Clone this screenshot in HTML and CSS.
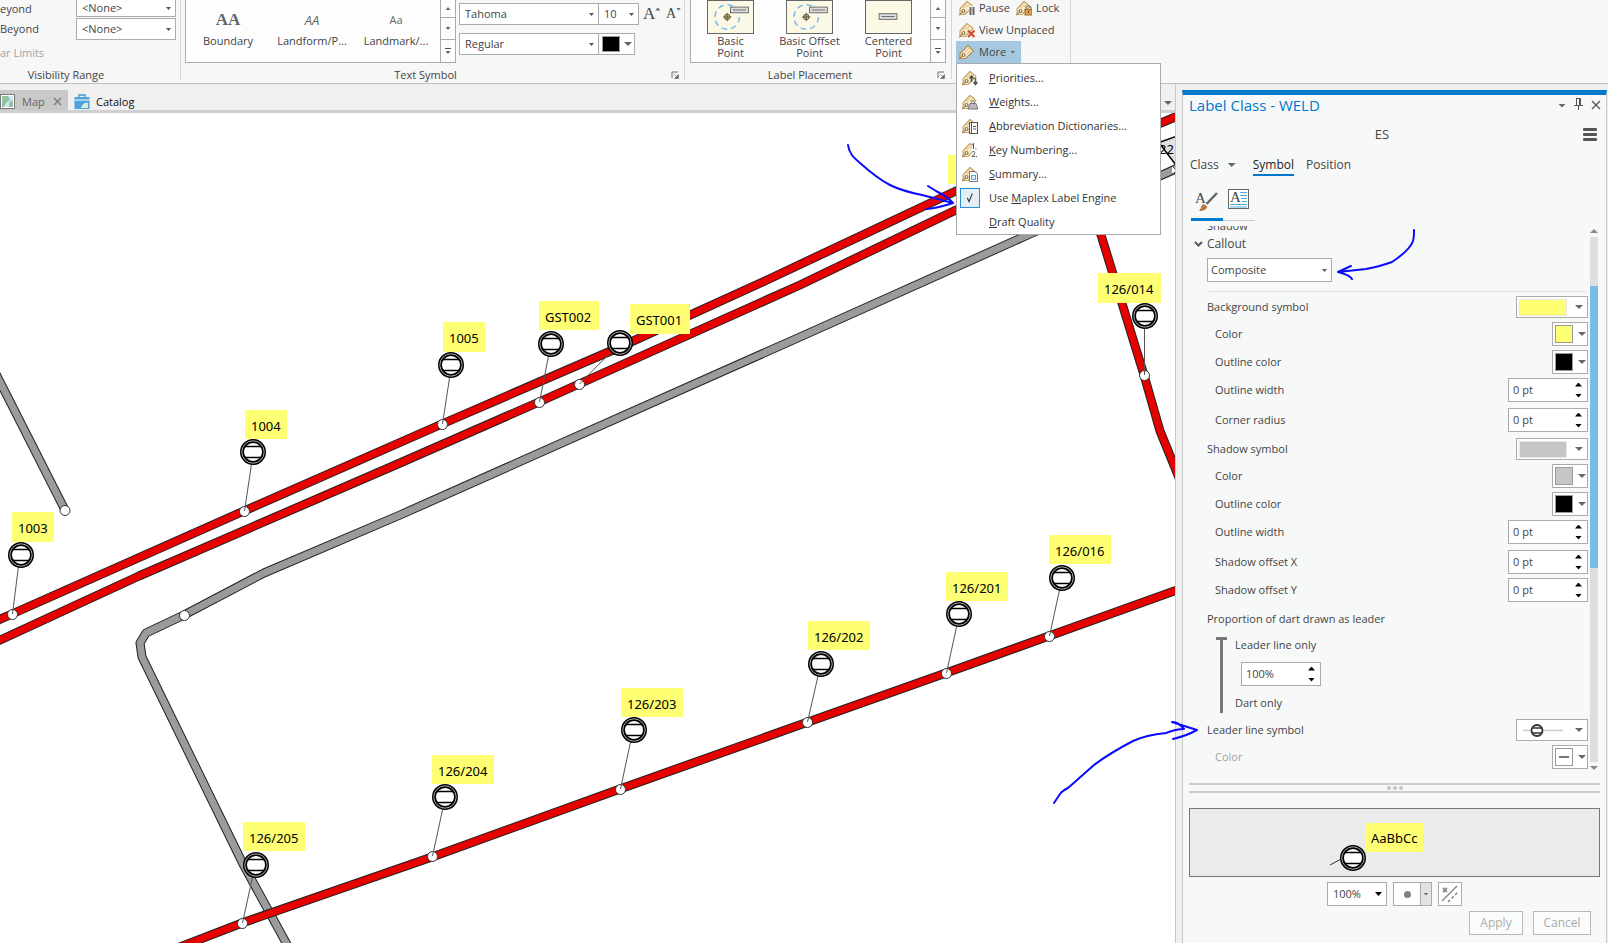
FILE: index.html
```html
<!DOCTYPE html>
<html lang="en">
<head>
<meta charset="utf-8">
<title>Label Class - WELD</title>
<link rel="stylesheet" href="styles.css">
</head>
<body>
<svg class="defs" aria-hidden="true">
  <symbol id="tag" viewBox="0 0 16 16">
    <path d="M1 14.500V9.500L9 1.500L14.500 7L6.500 14.500Z" fill="#f8ecc8" stroke="#b98f55" stroke-width="1.200" stroke-linejoin="round"/>
    <path d="M6 8L10 4M8 10L12 6" stroke="#d9b878" fill="none"/>
    <circle cx="4.500" cy="11" r="1.500" fill="#fff" stroke="#7a5c34"/>
    <path d="M0 15.500L4 11.500" stroke="#7a5c34"/>
  </symbol>
  <symbol id="tagcut" viewBox="0 0 16 16">
    <path d="M1 14.500V9L8 1.500L14 6.500L6 14.500Z" fill="#f8ecc8" stroke="#c9a368" stroke-width="1.200" stroke-linejoin="round"/>
    <path d="M4.500 8L8 4.500M8 7L10 5" stroke="#d9b878" fill="none"/>
    <circle cx="4.500" cy="11" r="1.500" fill="#fff" stroke="#7a5c34"/>
    <path d="M0 15.500L4 11.500" stroke="#7a5c34"/>
  </symbol>
  <symbol id="weld" viewBox="-14 -14 28 28" overflow="visible">
    <circle r="11" fill="#fff" stroke="#000" stroke-width="4"/>
    <circle r="11.200" fill="none" stroke="#aaa" stroke-width="1"/>
    <path d="M-8.500 -5.500H8.500M-8.500 5.500H8.500" stroke="#000" stroke-width="1.500"/>
  </symbol>
  <symbol id="launch" viewBox="0 0 8 8">
    <path d="M1 7V1H7" fill="none" stroke="#6a6a6a"/>
    <path d="M3 3L6 6M7.500 3.500V7.500H3.500Z" fill="#6a6a6a" stroke="#6a6a6a" stroke-width=".6"/>
  </symbol>
  <symbol id="target" viewBox="0 0 45 34">
    <circle cx="19" cy="17" r="13" fill="none" stroke="#70b8e8" stroke-width="1.500" stroke-dasharray="6 4.200"/>
    <circle cx="19" cy="17" r="3" fill="#e0b93a" stroke="#555"/>
    <path d="M19 12.500V21.500M14.500 17H23.500" stroke="#555"/>
    <rect x="22.500" y="6.500" width="19" height="6" fill="#ddd" stroke="#666"/>
    <path d="M25 9.500H39" stroke="#666"/>
  </symbol>
</svg>

<div class="app">
  <header class="ribbon">
    <section class="group range">
      <div class="group-body range-body">
        <label for="in">eyond</label>
        <select id="in" class="box cut"><option>&lt;None&gt;</option></select>
        <label for="out">Beyond</label>
        <select id="out" class="box"><option>&lt;None&gt;</option></select>
        <span class="dim">ar Limits</span>
      </div>
      <div class="group-name">Visibility Range</div>
    </section>

    <section class="group text-symbol">
      <div class="group-body">
        <div class="gallery">
          <button class="style"><b class="aa wide">AA</b>Boundary</button>
          <button class="style"><i class="aa">AA</i>Landform/P...</button>
          <button class="style"><span class="aa small">Aa</span>Landmark/...</button>
          <div class="steps">
            <button aria-label="Previous"><i class="tri up"></i></button>
            <button aria-label="Next"><i class="tri"></i></button>
            <button aria-label="All"><i class="bar"></i><i class="tri"></i></button>
          </div>
        </div>
        <div class="fonts">
          <div class="font-row">
            <select class="box font" aria-label="Font"><option>Tahoma</option></select>
            <select class="box size" aria-label="Size"><option>10</option></select>
            <button class="grow" aria-label="Larger">A<i class="tri up"></i></button>
            <button class="grow less" aria-label="Smaller">A<i class="tri"></i></button>
          </div>
          <div class="font-row">
            <select class="box font" aria-label="Style"><option>Regular</option></select>
            <button class="box ink" aria-label="Text color"><i class="chip black"></i><i class="tri big"></i></button>
          </div>
        </div>
      </div>
      <div class="group-name">Text Symbol<svg class="launch"><use href="#launch"/></svg></div>
    </section>

    <section class="group placement">
      <div class="group-body">
        <div class="gallery">
          <button class="place"><svg class="thumb"><use href="#target"/></svg>Basic<br>Point</button>
          <button class="place"><svg class="thumb"><use href="#target"/></svg>Basic Offset<br>Point</button>
          <button class="place"><svg class="thumb" viewBox="0 0 45 34"><rect x="12.500" y="13.500" width="19" height="6" fill="#ddd" stroke="#666"/><path d="M15 16.500H29" stroke="#666"/></svg>Centered<br>Point</button>
          <div class="steps">
            <button aria-label="Previous"><i class="tri up"></i></button>
            <button aria-label="Next"><i class="tri"></i></button>
            <button aria-label="All"><i class="bar"></i><i class="tri"></i></button>
          </div>
        </div>
      </div>
      <div class="group-name">Label Placement<svg class="launch"><use href="#launch"/></svg></div>
    </section>

    <section class="group map-tools">
      <div class="tool-row">
        <button class="tool"><svg class="ico" viewBox="0 0 16 16"><use href="#tagcut"/><path d="M10 6H16V16H10Z" fill="#f7f7f7"/><path d="M11.500 7V15M14.500 7V15" stroke="#666" stroke-width="2"/></svg>Pause</button>
        <button class="tool"><svg class="ico" viewBox="0 0 16 16"><use href="#tagcut"/><path d="M10 10V8Q10 6 12.500 6T15 8V10" fill="none" stroke="#777" stroke-width="1.200"/><rect x="9" y="9.500" width="7" height="5.500" fill="#e0a050" stroke="#a06a2c"/><path d="M12.500 11V13" stroke="#5c3a10"/></svg>Lock</button>
      </div>
      <button class="tool"><svg class="ico" viewBox="0 0 16 16"><use href="#tagcut"/><path d="M9 8.500L15.500 15M15.500 8.500L9 15" stroke="#d24a28" stroke-width="2"/></svg>View Unplaced</button>
      <div class="more-wrap">
        <button class="tool more"><svg class="ico"><use href="#tag"/></svg>More<i class="tri"></i></button>
        <div class="menu" role="menu">
          <button role="menuitem"><svg class="ico" viewBox="0 0 16 16"><use href="#tagcut"/><path d="M9.500 12V7M7.500 8.500L9.500 6L11.500 8.500M13.500 8V14M11.500 12L13.500 14.500L15.500 12" fill="none" stroke="#555" stroke-width="1.500"/></svg><span><u>P</u>riorities...</span></button>
          <button role="menuitem"><svg class="ico" viewBox="0 0 16 16"><use href="#tagcut"/><circle cx="11" cy="8" r="1.500" fill="#fff" stroke="#777"/><path d="M8 9.500H14L16 15H6Z" fill="#bbb" stroke="#777"/></svg><span><u>W</u>eights...</span></button>
          <button role="menuitem"><svg class="ico" viewBox="0 0 16 16"><use href="#tagcut"/><rect x="7.500" y="4.500" width="8" height="11" fill="#fff" stroke="#555"/><path d="M9.500 5V15M11 8.500H14M11 11H14" stroke="#555"/></svg><span><u>A</u>bbreviation Dictionaries...</span></button>
          <button role="menuitem"><svg class="ico" viewBox="0 0 16 16"><use href="#tagcut"/><path d="M10.500 0H16V16H9Z" fill="#fff"/><path d="M10 2.500L11.500 1.500V7M14 6.500V7.500M10 10.500Q10.500 9 12 9.500T12 12.500L10 14.500H13M14.500 14V15" fill="none" stroke="#555"/></svg><span><u>K</u>ey Numbering...</span></button>
          <button role="menuitem"><svg class="ico" viewBox="0 0 16 16"><use href="#tagcut"/><path d="M7.500 5.500H13L15.500 8V15.500H7.500Z" fill="#fff" stroke="#777"/><rect x="9.500" y="9.500" width="4" height="4" fill="#d5ecfa" stroke="#5aa9dc"/></svg><span><u>S</u>ummary...</span></button>
          <button role="menuitemcheckbox" aria-checked="true"><svg class="ico checked" viewBox="0 0 20 20"><path d="M7 10L9 14L12.500 5" fill="none" stroke="#333" stroke-width="1.200"/></svg><span>Use <u>M</u>aplex Label Engine</span></button>
          <button role="menuitemcheckbox" aria-checked="false"><span class="ico"></span><span><u>D</u>raft Quality</span></button>
        </div>
      </div>
    </section>
  </header>

  <main class="work">
    <section class="view">
      <nav class="tabs">
        <button class="tab off"><svg class="tab-ico" viewBox="0 0 16 16"><rect x=".500" y=".500" width="14" height="14" fill="#fff" stroke="#777"/><path d="M2 2H13V13H2Z" fill="#8fc3a0"/><path d="M8 2H13V6L9 9V13H4L6 9L10 6Z" fill="#cfe8f6"/></svg>Map<svg class="x" viewBox="0 0 9 9"><path d="M1 1L8 8M8 1L1 8" stroke="#777" stroke-width="1.300"/></svg></button>
        <button class="tab"><svg class="tab-ico" viewBox="0 0 16 16"><path d="M5 3V1H11V3" fill="none" stroke="#3f93cf" stroke-width="1.300"/><rect x=".500" y="3" width="15" height="12" fill="#4fa3dc"/><path d="M1 6H15" stroke="#fff"/><path d="M7 14Q9 8 14 9V14Z" fill="#dcebd0"/></svg>Catalog</button>
        <i class="tri big tabs-more"></i>
      </nav>
      <svg class="map" viewBox="0 113 1175 830" preserveAspectRatio="xMinYMin slice" role="img" aria-label="Pipeline map">
        <defs>
          <path id="g1" d="M-4 374L65 510"/>
          <path id="g2" d="M1180 167L1030 234L800 337L400 515L264 573L184 615L146 633L140 643L142 657L243 864L290 950"/>
          <path id="r1" d="M-4 621L12 614L244 511L442 424L620 347L767 280L956 191L1161 123L1180 115"/>
          <path id="r2" d="M-4 642L139 576L400 463L539 402L579 384L800 285L956 210L1088 196L1101 235L1144 375L1160 431L1180 480"/>
          <path id="r3" d="M180 947L242 923L432 857L620 789L808 722L946 673L1049 636L1180 589"/>
        </defs>
        <path d="M1155 145L1180 135V170L1155 140Z" fill="#e0e0e4"/>
        <g class="edge"><use href="#g1"/><use href="#g2"/></g>
        <g class="gray"><use href="#g1"/><use href="#g2"/></g>
        <g class="edge"><use href="#r1"/><use href="#r2"/><use href="#r3"/></g>
        <g class="red"><use href="#r1"/><use href="#r2"/><use href="#r3"/></g>
        <path d="M1155 144L1180 135M1160 144L1176 165" stroke="#000" stroke-width="1.500"/>
        <path d="M1172 166L1177 171L1172 174" fill="#fff" stroke="#555"/>
        <text x="1159" y="154">22</text>
        <g class="node">
          <circle cx="65" cy="510.500" r="5"/><circle cx="184.500" cy="615.500" r="5"/>
          <circle cx="12.500" cy="614.500" r="5"/><circle cx="244.500" cy="511.500" r="5"/><circle cx="442.500" cy="424.500" r="5"/>
          <circle cx="539.500" cy="402.500" r="5"/><circle cx="579.500" cy="384.500" r="5"/><circle cx="1144.500" cy="375.500" r="5"/>
          <circle cx="1049.500" cy="636.500" r="5"/><circle cx="946.500" cy="673.500" r="5"/><circle cx="807.500" cy="722.500" r="5"/>
          <circle cx="620.500" cy="789.500" r="5"/><circle cx="432.500" cy="856.500" r="5"/><circle cx="242.500" cy="923.500" r="5"/>
        </g>
        <g class="lead">
          <path d="M12.500 614L18.500 566M244.500 511L251.500 464M442.500 424L449.500 378M539.500 402L548.500 356M579.500 384L610 353M1144.500 375V329M1049.500 636L1059.500 590M946.500 673L956.500 627M807.500 722L818 676M620.500 789L630.500 742M432.500 856L442.500 810M242.500 923L252.500 877"/>
        </g>
        <g fill="#ffff73">
          <rect x="12" y="512" width="42" height="30"/><rect x="245" y="410" width="42" height="29"/><rect x="443" y="322" width="42" height="30"/>
          <rect x="539" y="301" width="60" height="29"/><rect x="630" y="304" width="60" height="30"/><rect x="1098" y="273" width="63" height="30"/>
          <rect x="1049" y="535" width="62" height="29"/><rect x="946" y="572" width="62" height="29"/><rect x="808" y="621" width="62" height="29"/>
          <rect x="621" y="688" width="62" height="29"/><rect x="432" y="755" width="62" height="29"/><rect x="243" y="822" width="62" height="29"/>
          <rect x="948" y="155" width="62" height="29"/>
        </g>
        <g>
          <use href="#weld" x="7" y="541" width="28" height="28"/><use href="#weld" x="239" y="438" width="28" height="28"/><use href="#weld" x="437" y="351" width="28" height="28"/>
          <use href="#weld" x="537" y="330" width="28" height="28"/><use href="#weld" x="606" y="329" width="28" height="28"/><use href="#weld" x="1131" y="302" width="28" height="28"/>
          <use href="#weld" x="1048" y="564" width="28" height="28"/><use href="#weld" x="945" y="600" width="28" height="28"/><use href="#weld" x="807" y="650" width="28" height="28"/>
          <use href="#weld" x="620" y="716" width="28" height="28"/><use href="#weld" x="431" y="783" width="28" height="28"/><use href="#weld" x="242" y="851" width="28" height="28"/>
        </g>
        <text x="18" y="533">1003</text><text x="251" y="431">1004</text><text x="449" y="343">1005</text>
        <text x="545" y="322">GST002</text><text x="636" y="325">GST001</text><text x="1104" y="294">126/014</text>
        <text x="1055" y="556">126/016</text><text x="952" y="593">126/201</text><text x="814" y="642">126/202</text>
        <text x="627" y="709">126/203</text><text x="438" y="776">126/204</text><text x="249" y="843">126/205</text>
      </svg>
    </section>

    <aside class="panel">
      <div class="title"><h1>Label Class - WELD</h1>
        <button aria-label="Options"><i class="tri big"></i></button>
        <button aria-label="Pin"><svg width="9" height="12" viewBox="0 0 9 12"><path d="M2.500 1V7M2 .500H6.500V7M0 7.500H9M4.500 8V12M5.500 1V7" fill="none" stroke="#555"/></svg></button>
        <button aria-label="Close"><svg width="10" height="10" viewBox="0 0 10 10"><path d="M1 1L9 9M9 1L1 9" stroke="#555" stroke-width="1.300"/></svg></button>
      </div>
      <div class="sub"><span></span><span>ES</span><button class="burger" aria-label="Menu"><i></i><i></i><i></i></button></div>
      <nav class="modes"><button>Class<i class="tri big"></i></button><button class="on">Symbol</button><button>Position</button></nav>
      <div class="kinds">
        <button class="on" aria-label="General"><svg width="24" height="24" viewBox="0 0 24 24"><text x="0" y="14" class="serif">A</text><path d="M22 4L11.500 15" stroke="#666" stroke-width="2.500"/><path d="M9 15L12.500 18Q10 22.500 4 22Q6 20 6 18Q6.500 15.500 9 15Z" fill="#b07a45"/></svg></button>
        <button aria-label="Formatting"><svg width="22" height="22" viewBox="0 0 22 22"><rect x=".500" y=".500" width="20" height="19" fill="#fff" stroke="#666"/><path d="M12 3.500H19M12 6.500H19M13 9.500H19M14 12.500H19M2 15.500H19M2 18H19" stroke="#5aa9dc"/><text x="2" y="13" class="serif">A</text></svg></button>
      </div>

      <div class="scroller">
        <div class="form">
          <div class="cropped">Shadow</div>
          <h2><svg width="9" height="6" viewBox="0 0 9 6"><path d="M1 1L4.500 4.500L8 1" fill="none" stroke="#555" stroke-width="2"/></svg>Callout</h2>
          <select class="box callout" aria-label="Callout"><option>Composite</option></select>
          <hr>
          <div class="row"><label for="bg">Background symbol</label><button id="bg" class="box symbol"><i class="fill yellow"></i><i class="tri big"></i></button></div>
          <div class="row in"><label for="c1">Color</label><button id="c1" class="box color"><i class="chip yellow"></i><i class="tri big"></i></button></div>
          <div class="row in"><label for="c2">Outline color</label><button id="c2" class="box color"><i class="chip black"></i><i class="tri big"></i></button></div>
          <div class="row in"><label for="w1">Outline width</label><span class="box spin"><input id="w1" value="0 pt"><span class="arrows"><button class="tri up" aria-label="Up"></button><button class="tri" aria-label="Down"></button></span></span></div>
          <div class="row in before after"><label for="w2">Corner radius</label><span class="box spin"><input id="w2" value="0 pt"><span class="arrows"><button class="tri up" aria-label="Up"></button><button class="tri" aria-label="Down"></button></span></span></div>
          <div class="row"><label for="sh">Shadow symbol</label><button id="sh" class="box symbol"><i class="fill silver"></i><i class="tri big"></i></button></div>
          <div class="row in"><label for="c3">Color</label><button id="c3" class="box color"><i class="chip silver"></i><i class="tri big"></i></button></div>
          <div class="row in"><label for="c4">Outline color</label><button id="c4" class="box color"><i class="chip black"></i><i class="tri big"></i></button></div>
          <div class="row in"><label for="w3">Outline width</label><span class="box spin"><input id="w3" value="0 pt"><span class="arrows"><button class="tri up" aria-label="Up"></button><button class="tri" aria-label="Down"></button></span></span></div>
          <div class="row in before"><label for="w4">Shadow offset X</label><span class="box spin"><input id="w4" value="0 pt"><span class="arrows"><button class="tri up" aria-label="Up"></button><button class="tri" aria-label="Down"></button></span></span></div>
          <div class="row in"><label for="w5">Shadow offset Y</label><span class="box spin"><input id="w5" value="0 pt"><span class="arrows"><button class="tri up" aria-label="Up"></button><button class="tri" aria-label="Down"></button></span></span></div>
          <label class="heading" for="dart">Proportion of dart drawn as leader</label>
          <div class="dart">
            <input id="dart" type="range" min="0" max="100" value="100">
            <div class="dart-text">
              <span>Leader line only</span>
              <span class="box spin"><input aria-label="Proportion" value="100%"><span class="arrows"><button class="tri up" aria-label="Up"></button><button class="tri" aria-label="Down"></button></span></span>
              <span>Dart only</span>
            </div>
          </div>
          <div class="row"><label for="ll">Leader line symbol</label><button id="ll" class="box symbol"><svg width="48" height="16" viewBox="0 0 48 16"><path d="M4 8.500H44" stroke="#ccc" stroke-width="1.500"/><circle cx="18" cy="8.500" r="5.500" fill="#fff" stroke="#333" stroke-width="1.800"/><path d="M13 6H23M13 11H23" stroke="#333" stroke-width="1.400"/></svg><i class="tri big"></i></button></div>
          <div class="row in dim"><label for="c5">Color</label><button id="c5" class="box color"><i class="chip line"></i><i class="tri big"></i></button></div>
          <div class="row in"><span></span><span class="box spin"></span></div>
        </div>
        <div class="bar-v"><i class="tri big up"></i><div class="track"><div class="thumb-v"></div></div><i class="tri big"></i></div>
      </div>

      <div class="split"><i></i><i></i><i></i></div>
      <div class="preview">
        <svg width="96" height="48" viewBox="0 0 96 48" role="img" aria-label="Preview">
          <path d="M2 42L13 36" stroke="#333"/><rect x="37" y="0" width="58" height="29" fill="#ffff73"/>
          <use href="#weld" x="11" y="21" width="28" height="28"/><text x="43" y="20">AaBbCc</text>
        </svg>
      </div>
      <div class="zoom">
        <select class="box percent" aria-label="Zoom"><option>100%</option></select>
        <button class="box dot" aria-label="Geometry"><span><i></i></span><span class="drop"><i class="tri"></i></span></button>
        <button class="box hash" aria-label="Options"><svg width="20" height="20" viewBox="0 0 20 20"><path d="M3 4L7 8M7 4L3 8" stroke="#888" stroke-width="1.800"/><path d="M2 17L17 2" stroke="#888" stroke-width="1.500"/><path d="M8 18L18 8" stroke="#888" stroke-width="1.500" stroke-dasharray="3 2"/></svg></button>
      </div>
      <div class="actions"><button class="box" disabled>Apply</button><button class="box" disabled>Cancel</button></div>
    </aside>
  </main>

  <svg class="ink-notes" viewBox="0 0 1608 943" preserveAspectRatio="xMinYMin slice" aria-hidden="true">
    <path d="M848 145C849 153 853 157 860 163Q878 179 890 185T922 195L953 203M928 186L936 191Q948 197 953 203Q938 208 927 209"/>
    <path d="M1414 230Q1414 238 1413 241Q1410 250 1392 262Q1378 267 1366 269L1338 272L1351 266M1338 272Q1350 275 1352 279"/>
    <path d="M1054 803L1060 794Q1062 791 1068 788L1094 765Q1110 753 1133 741Q1146 735 1166 733Q1176 729 1184 729M1172 722Q1184 726 1197 730Q1186 736 1173 739M1173 722Q1178 722 1184 729"/>
  </svg>
</div>
</body>
</html>
```
FILE: styles.css
```css
* { box-sizing: border-box; }

body {
  margin: 0;
  font: 11px/16px "Open Sans", "Noto Sans", sans-serif;
  color: #444;
  background: #f0f0f0;
}

button, input, select { font: inherit; color: inherit; margin: 0; padding: 0; border: 0; background: none; border-radius: 0; }
h1, h2 { margin: 0; font-weight: 400; }
.defs { position: absolute; width: 0; height: 0; }

.app { position: relative; height: 100vh; display: flex; flex-direction: column; overflow: hidden; }

.box { border: 1px solid #ababab; background: #fff; }
select.box {
  appearance: none;
  padding: 0 5px;
  background: #fff url("data:image/svg+xml,%3Csvg xmlns='http://www.w3.org/2000/svg' width='5' height='3'%3E%3Cpath d='M0 0H5L2.5 3Z' fill='%23555'/%3E%3C/svg%3E") right 4px center no-repeat;
}
select.percent {
  background-image: url("data:image/svg+xml,%3Csvg xmlns='http://www.w3.org/2000/svg' width='7' height='4'%3E%3Cpath d='M0 0H7L3.5 4Z' fill='%23000'/%3E%3C/svg%3E");
}
.dim { color: #a0a0a0; }

.tri { display: block; width: 5px; height: 3px; background: #666; clip-path: polygon(0 0, 100% 0, 50% 100%); }
.tri.up { clip-path: polygon(50% 0, 100% 100%, 0 100%); }
.tri.big { width: 8px; height: 4px; }

/* ribbon */
.ribbon { display: flex; height: 84px; background: #f7f7f7; border-bottom: 1px solid #bdbdbd; }
.group { display: flex; flex-direction: column; height: 79px; border-right: 1px solid #d5d5d5; }
.group-body { display: flex; height: 67px; flex: none; }
.group-name { display: flex; justify-content: center; align-items: center; line-height: 16px; position: relative; }
.launch { position: absolute; right: 5px; top: 4px; width: 8px; height: 8px; }

.range { width: 181px; }
.range-body { display: grid; grid-template-columns: 1fr 100px; grid-template-rows: 17px 22px 20px; row-gap: 1px; padding-right: 4px; align-items: center; }
.range .group-name { padding-right: 48px; }
.range select { height: 100%; width: 100%; }
.range select.cut { border-top: 0; }
.range .dim { padding-top: 4px; }

.text-symbol { width: 504px; padding-left: 4px; }
.text-symbol .group-name { padding-right: 18px; }
.gallery { display: flex; height: 63px; border: 1px solid #ababab; border-top: 0; background: #fdfdfd; }
.style { width: 84px; display: flex; flex-direction: column; align-items: center; padding-top: 10px; }
.aa { height: 23px; font-size: 13px; line-height: 20px; color: #666; }
.aa.wide { font: 700 17px/20px "Liberation Serif", serif; }
.aa.small { font-size: 11px; }
.steps { width: 15px; margin-left: 2px; display: grid; grid-template-rows: 18px 22px 22px; border-left: 1px solid #ababab; }
.steps button { display: flex; flex-direction: column; gap: 2px; align-items: center; justify-content: center; border-bottom: 1px solid #ababab; }
.steps button:last-child { border-bottom: 0; }
.bar { display: block; width: 6px; height: 1px; background: #555; }

.fonts { display: flex; flex-direction: column; gap: 8px; padding: 3px 0 0 3px; }
.font-row { display: flex; height: 22px; }
.font { width: 140px; }
.size { width: 40px; border-left: 0; }
.ink { width: 36px; border-left: 0; display: flex; align-items: center; gap: 4px; padding-left: 3px; }
.grow { display: flex; align-items: center; margin-left: 4px; width: 19px; font: 17px "Liberation Serif", serif; }
.grow .tri { margin-bottom: 10px; }
.grow.less { font-size: 14px; }

.chip { display: block; width: 18px; height: 18px; border: 1px solid #999; flex: none; }
.ink .chip { width: 18px; height: 16px; }
.black { background: #000; }
.yellow { background: #ffff73; }
.silver { background: #c6c6c6; }

.placement { width: 267px; padding: 0 6px 0 5px; }
.placement .group-name { padding-right: 15px; }
.placement .launch { right: 0; }
.place { width: 79px; line-height: 12px; display: block; text-align: center; padding-bottom: 3px; }
.thumb { display: block; width: 47px; height: 34px; margin: 0 auto 1px; background: #fbf8e6; border: 1px solid #666; }

.map-tools { width: 119px; padding-left: 4px; height: 84px; }
.tool-row { display: flex; height: 19px; gap: 6px; }
.tool { display: flex; align-items: center; gap: 4px; height: 22px; padding-left: 3px; }
.tool-row .tool { height: 16px; }
.tool-row .tool + .tool { padding-left: 0; }
.ico { width: 16px; height: 16px; flex: none; }
.more-wrap { position: relative; }
.more { background: #a5c8e1; width: 65px; }
.menu { position: absolute; z-index: 5; top: 22px; left: 0; width: 205px; padding: 2px 0 0; background: #fff; border: 1px solid #a9a9b0; }
.menu button { display: flex; align-items: center; width: 100%; height: 24px; padding-left: 5px; gap: 11px; text-align: left; color: #333; white-space: nowrap; }
.menu .checked { width: 20px; height: 20px; margin: 0 -2px; background: #e6eef5; border: 1px solid #2a8dd4; }

/* document view */
.work { flex: 1; display: flex; min-height: 0; }
.view { flex: 1; min-width: 0; display: flex; flex-direction: column; border-right: 1px solid #c8c8c8; }
.tabs { display: flex; height: 29px; padding-top: 6px; border-bottom: 3px solid #cfcfcf; color: #111; }
.tab { display: flex; align-items: center; gap: 6px; padding: 3px 6px 0; }
.tab.off { background: #c9c9c9; color: #666; width: 68px; padding: 3px 6px 0 0; }
.tab-ico { width: 16px; height: 16px; flex: none; }
.x { width: 9px; height: 9px; margin-left: 2px; }
.tabs-more { margin: 11px 3px 0 auto; }
.map { flex: 1; min-height: 0; width: 100%; background: #fff; }
.map text, .preview text { font: 13px "Noto Sans", sans-serif; fill: #000; }
.edge use, .gray use, .red use { fill: none; stroke-linejoin: round; }
.edge { stroke: #222; stroke-width: 9px; }
.gray { stroke: #9b9b9b; stroke-width: 7px; }
.red { stroke: #e60000; stroke-width: 7px; }
.node { fill: #fff; stroke: #333; stroke-width: 1px; }
.lead { fill: none; stroke: #555; stroke-width: 1px; }

/* label class pane */
.panel { width: 425px; flex: none; margin: 6px 1px 0 6px; display: flex; flex-direction: column; background: #f7f9f8; border: 1px solid #c8c8c8; border-width: 0 1px; border-top: 5px solid #0078cc; }
.title { display: flex; align-items: center; gap: 8px; height: 21px; padding: 0 5px 0 6px; }
.title h1 { flex: 1; font-size: 15px; line-height: 21px; color: #0078cc; }
.sub { display: grid; grid-template-columns: 1fr auto 1fr; align-items: center; height: 36px; padding: 0 9px 0 0; font-size: 13px; }
.sub span { margin-right: 8px; }
.sub span + span { margin: 0 8px 0 -8px; }
.burger { justify-self: end; display: grid; gap: 2px; }
.burger i { display: block; width: 14px; height: 3px; border-radius: 1px; background: #555; }
.modes { display: flex; height: 28px; padding: 2px 0 0 7px; font-size: 12px; gap: 12px; align-items: flex-start; }
.modes button { display: flex; align-items: center; gap: 9px; height: 22px; }
.modes button:first-child { margin-right: 5px; }
.modes .on { border-bottom: 2px solid #0078cc; padding-top: 2px; color: #222; }
.kinds { display: flex; padding: 5px 0 5px 8px; }
.kinds button { width: 32px; height: 36px; display: flex; justify-content: center; padding-top: 4px; border-bottom: 1px solid #ccc; }
.kinds .on { border-bottom: 3px solid #0078cc; }
.serif { font: 15px "Liberation Serif", serif; fill: #444; }

.scroller { flex: 1; min-height: 0; display: flex; padding-right: 8px; overflow: hidden; }
.form { flex: 1; display: flex; flex-direction: column; gap: 4px; overflow: hidden; padding: 0 2px 0 24px; }
.form > * { flex: none; }
.cropped { display: flex; align-items: flex-end; height: 8px; overflow: hidden; margin-bottom: -4px; }
.form h2 { display: flex; align-items: center; gap: 4px; height: 20px; font-size: 12px; margin-left: -13px; }
.form .callout { width: 125px; height: 24px; padding-left: 3px; }
.form hr { width: auto; margin: 5px 2px 0; border: 0; border-top: 1px solid #dcdcdc; height: 1px; }
.row { display: flex; justify-content: space-between; align-items: center; }
.row.in { padding-left: 8px; }
.row.before { padding-top: 2px; }
.row.after { padding-bottom: 2px; }
.symbol { width: 72px; height: 22px; display: flex; align-items: center; justify-content: space-between; padding: 0 4px 0 2px; }
.fill { display: block; width: 48px; height: 17px; border: 1px solid #e8e8e0; }
.color { width: 36px; height: 24px; display: flex; align-items: center; gap: 5px; padding-left: 2px; }
.chip.line { background: linear-gradient(#777, #777) center / 10px 2px no-repeat; }
.spin { width: 80px; height: 24px; display: flex; align-items: center; }
.spin input { width: 60px; padding-left: 4px; outline: 0; }
.arrows { display: grid; gap: 7px; margin-left: 6px; }
.arrows .tri { width: 7px; height: 4px; background: #000; }
.heading { padding-top: 5px; height: 22px; }
.dart { display: flex; gap: 7px; height: 83px; padding: 5px 0 0 8px; }
.dart > input { appearance: none; writing-mode: vertical-lr; direction: rtl; width: 13px; height: 76px; background: linear-gradient(#777, #777) center bottom / 3px 74px no-repeat; }
.dart > input::-webkit-slider-thumb { appearance: none; width: 11px; height: 3px; background: #777; }
.dart-text { display: grid; grid-template-rows: 16px 24px 16px; row-gap: 9px; }
.dart-text .spin { margin-left: 6px; }
.bar-v { width: 8px; display: flex; flex-direction: column; align-items: center; gap: 4px; padding: 3px 0; }
.bar-v .tri { background: #888; }
.track { flex: 1; width: 8px; background: #dedede; padding-top: 49px; }
.thumb-v { height: 282px; background: #78bce8; }

.split { height: 10px; margin: 10px 6px 15px; border: 2px solid #cbcbcb; border-width: 2px 0; display: flex; justify-content: center; align-items: center; gap: 2px; }
.split i { width: 4px; height: 4px; border-radius: 50%; background: #c4c4c4; }
.preview { height: 69px; margin: 0 6px; border: 1px solid #777; background: #ebebeb; display: flex; justify-content: center; padding: 14px 37px 0 0; }
.preview svg { overflow: visible; }
.zoom { display: flex; justify-content: center; gap: 6px; margin: 5px 0; height: 24px; }
.percent { width: 60px; }
.dot { width: 39px; display: flex; }
.dot span { flex: 1; display: flex; align-items: center; justify-content: center; align-self: stretch; }
.dot .drop { flex: none; width: 11px; background: #e2e2e2; border-left: 1px solid #ababab; }
.dot span:first-child i { width: 7px; height: 7px; border-radius: 50%; background: #808080; }
.hash { width: 24px; display: flex; align-items: center; justify-content: center; }
.actions { display: flex; justify-content: flex-end; gap: 10px; padding: 0 15px 8px; }
.actions button { height: 24px; width: 54px; font-size: 12px; color: #aaa; background: #fbfdfc; border-color: #b8b8b8; }
.actions button + button { width: 58px; }

.ink-notes { position: absolute; z-index: 6; left: 0; top: 0; width: 100%; height: 100%; pointer-events: none; fill: none; stroke: #0a0aff; stroke-width: 2px; stroke-linecap: round; stroke-linejoin: round; }
```
